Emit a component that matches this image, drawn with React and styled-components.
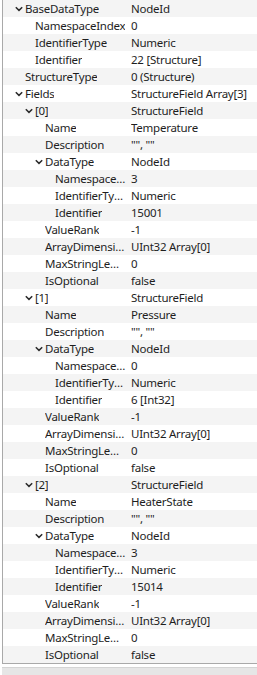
import React from "react";
import styled, { createGlobalStyle } from "styled-components";

const Global = createGlobalStyle`
  html, body { margin: 0; padding: 0; background: #ffffff; }
  body { font-family: "Noto Sans", "Open Sans", sans-serif; }
`;

const field = (n, name, ns, idType, id) => ({
  name: `[${n}]`,
  value: "StructureField",
  children: [
    { name: "Name", value: name },
    { name: "Description", value: '"", ""' },
    {
      name: "DataType",
      value: "NodeId",
      children: [
        { name: "NamespaceIndex", value: ns },
        { name: "IdentifierType", value: idType },
        { name: "Identifier", value: id },
      ],
    },
    { name: "ValueRank", value: "-1" },
    { name: "ArrayDimensions", value: "UInt32 Array[0]" },
    { name: "MaxStringLength", value: "0" },
    { name: "IsOptional", value: "false" },
  ],
});

const tree = [
  {
    name: "BaseDataType",
    value: "NodeId",
    children: [
      { name: "NamespaceIndex", value: "0" },
      { name: "IdentifierType", value: "Numeric" },
      { name: "Identifier", value: "22 [Structure]" },
    ],
  },
  { name: "StructureType", value: "0 (Structure)" },
  {
    name: "Fields",
    value: "StructureField Array[3]",
    children: [
      field(0, "Temperature", "3", "Numeric", "15001"),
      field(1, "Pressure", "0", "Numeric", "6 [Int32]"),
      field(2, "HeaterState", "3", "Numeric", "15014"),
    ],
  },
];

const flatten = (nodes, level = 0, out = []) => {
  nodes.forEach((n) => {
    out.push({ ...n, level });
    if (n.children) flatten(n.children, level + 1, out);
  });
  return out;
};

const rows = flatten(tree);

const Frame = styled.div`
  width: 257px;
  height: 675px;
  display: flex;
  flex-direction: column;
  background: #ffffff;
  overflow: hidden;
`;

const Panel = styled.div`
  margin-left: 2px;
  border-left: 1px solid #a9a9a9;
  border-bottom: 1px solid #a9a9a9;
  display: flex;
  flex-direction: column;
`;

const Row = styled.div`
  height: 17px;
  display: grid;
  grid-template-columns: 128px 1fr;
  align-items: center;
  background: ${(p) => (p.$alt ? "#f4f4f4" : "#ffffff")};
  color: #1e1e1e;
  font-size: 11.5px;
  letter-spacing: -0.25px;
  line-height: 17px;
  white-space: nowrap;
`;

const NameCell = styled.div`
  display: flex;
  align-items: center;
  padding-left: ${(p) => 12 + p.$level * 10}px;
  padding-right: 5px;
  min-width: 0;
  overflow: hidden;
`;

const Chevron = styled.span`
  width: 10px;
  flex: 0 0 10px;
  display: flex;
  align-items: center;
`;

const NameText = styled.span`
  overflow: hidden;
  text-overflow: ellipsis;
  min-width: 0;
`;

const ValueCell = styled.div`
  overflow: hidden;
`;

const BottomBar = styled.div`
  margin-top: 3px;
  margin-left: 2px;
  flex: 1;
  background: #e6e6e6;
  border-top: 1px solid #d4d4d4;
`;

const ChevronIcon = () => (
  <svg width="8" height="6" viewBox="0 0 8 6">
    <polyline points="0.8,1.2 4,4.4 7.2,1.2" fill="none" stroke="#2a2a2a" strokeWidth="1.5" />
  </svg>
);

export default function App() {
  return (
    <Frame>
      <Global />
      <Panel>
        {rows.map((r, i) => (
          <Row key={i} $alt={i % 2 === 0}>
            <NameCell $level={r.level}>
              <Chevron>{r.children ? <ChevronIcon /> : null}</Chevron>
              <NameText>{r.name}</NameText>
            </NameCell>
            <ValueCell>{r.value}</ValueCell>
          </Row>
        ))}
      </Panel>
      <BottomBar />
    </Frame>
  );
}
